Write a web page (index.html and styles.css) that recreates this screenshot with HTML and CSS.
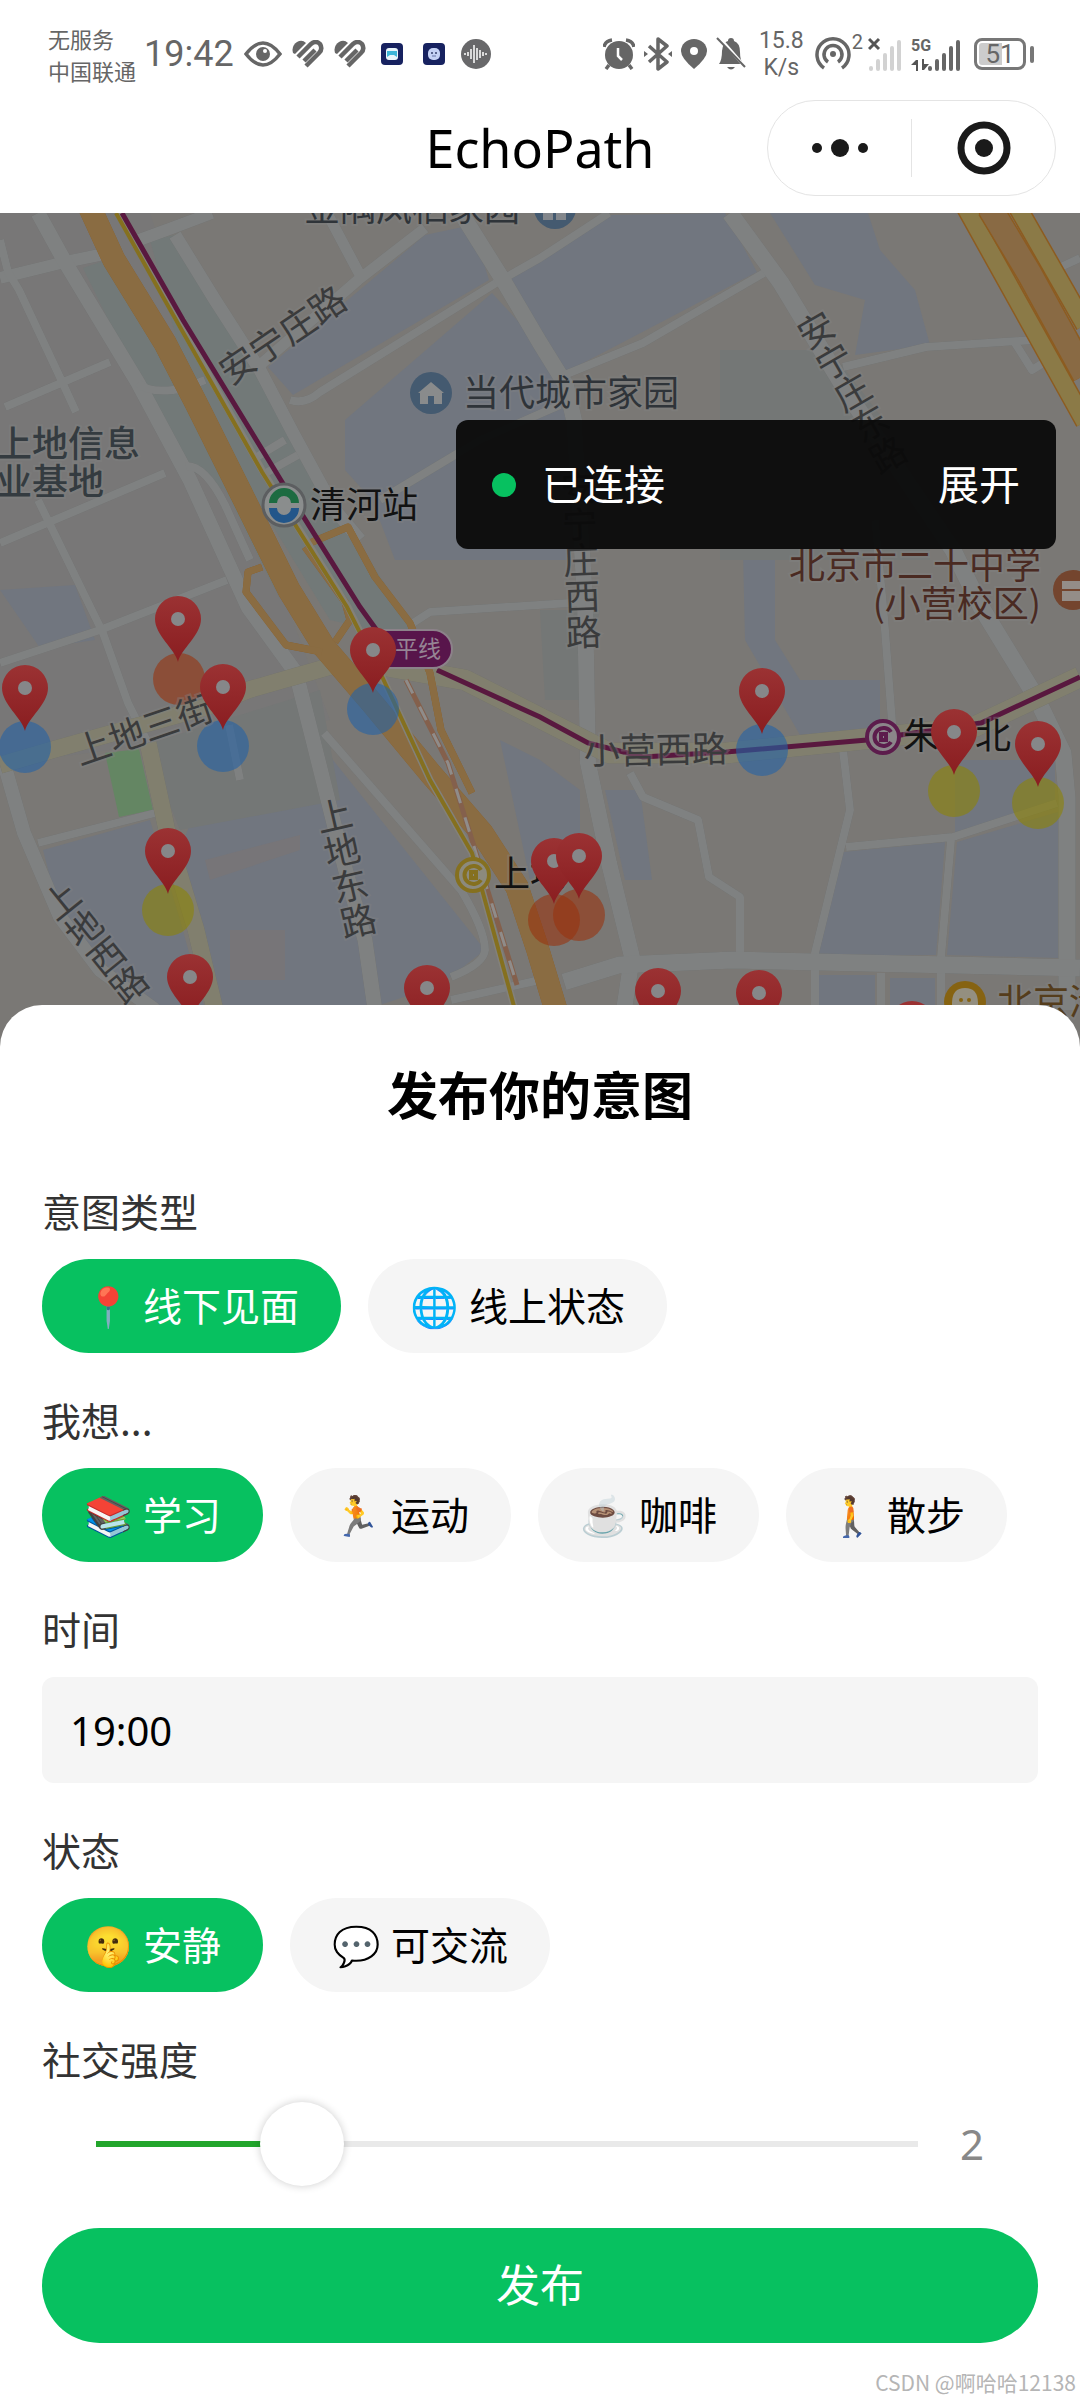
FILE: index.html
```html
<!DOCTYPE html>
<html lang="zh-CN">
<head>
<meta charset="utf-8">
<meta name="viewport" content="width=device-width, initial-scale=1">
<title>EchoPath</title>
<link rel="stylesheet" href="styles.css">
</head>
<body>
<div class="page">
  <header class="top">
    <div class="status">
      <div class="status-side">
        <div class="carrier"><span>无服务</span><span>中国联通</span></div>
        <span class="clock">19:42</span>
        <div class="tray">
          <svg width="38" height="28" viewBox="0 0 38 28"><path d="M2 14Q19-8 36 14Q19 36 2 14Z" fill="none" stroke="#666" stroke-width="3.5"/><circle cx="19" cy="14" r="7" fill="#666"/><circle cx="21" cy="11" r="2" fill="#fff"/></svg>
          <svg width="32" height="28" viewBox="0 0 32 28"><path d="M1 13Q-1 6 5 2Q10-1 14 3L3 14z" fill="#666"/><path d="M6 17L19 4Q24 0 28 4Q31 9 27 13L14 26M12 21L23 10" fill="none" stroke="#666" stroke-width="4.500"/></svg>
          <svg width="32" height="28" viewBox="0 0 32 28"><path d="M1 13Q-1 6 5 2Q10-1 14 3L3 14z" fill="#666"/><path d="M6 17L19 4Q24 0 28 4Q31 9 27 13L14 26M12 21L23 10" fill="none" stroke="#666" stroke-width="4.500"/></svg>
          <svg class="app-a" width="22" height="22" viewBox="0 0 22 22"><rect width="22" height="22" rx="4" fill="#172260"/><rect x="5" y="5" width="12" height="12" rx="3" fill="#e9f6fb"/><path d="M6 8h10v6l-3-2H9l-3 2z" fill="#3db6d8"/></svg>
          <svg class="app-b" width="22" height="22" viewBox="0 0 22 22"><rect width="22" height="22" rx="4" fill="#172260"/><rect x="5" y="5" width="12" height="12" rx="5" fill="#c5d2f5"/><circle cx="9" cy="10" r="1" fill="#34406d"/><circle cx="13" cy="10" r="1" fill="#34406d"/><path d="M9 13h4" stroke="#6675a8"/></svg>
          <svg class="wave" width="30" height="30" viewBox="0 0 30 30"><circle cx="15" cy="15" r="15" fill="#68686a"/><path d="M4 14v2M7 13v4M10 10v10M13 6v18M16 9v12M19 11v8M22 13v4M25 14v2" stroke="#fff" stroke-width="1.500"/></svg>
        </div>
      </div>
      <div class="status-side signals">
        <svg width="32" height="32" viewBox="0 0 32 32"><circle cx="16" cy="17" r="14" fill="#666"/><path d="M1 9Q2 3 9 2M31 9Q30 3 23 2M6 27l-3 4M26 27l3 4" stroke="#666" stroke-width="3.500" fill="none"/><path d="M15 10v8l4 4" stroke="#fff" stroke-width="2.500" fill="none"/></svg>
        <svg width="28" height="34" viewBox="0 0 28 34"><path d="M5 9l18 16-9 7V2l9 7L5 25" fill="none" stroke="#666" stroke-width="3.500" stroke-linejoin="round"/><path d="M0 14l4 3-4 3zM28 14l-4 3 4 3z" fill="#666"/></svg>
        <svg width="26" height="32" viewBox="0 0 26 32"><path d="M13 31Q0 20 0 13a13 12 0 0 1 26 0Q26 20 13 31Z" fill="#666"/><circle cx="13" cy="13" r="4" fill="#fff"/></svg>
        <svg width="30" height="34" viewBox="0 0 30 34"><path d="M3 27q3-4 3-13Q7 5 12 4q0-3 3-3t3 3q6 2 6 11 0 8 3 12zM11 30h8q-4 5-8 0z" fill="#666"/><path d="M3 0l26 30" stroke="#fff" stroke-width="3"/><path d="M1 1l28 29" stroke="#666" stroke-width="2"/></svg>
        <div class="speed"><span>15.8</span><span>K/s</span></div>
        <svg width="36" height="34" viewBox="0 0 36 34"><g fill="none" stroke="#666" stroke-width="3.500"><path d="M9 31a16 16 0 1 1 18 0"/><path d="M13 25a9 9 0 1 1 10 0"/></g><circle cx="18" cy="17" r="3" fill="#666"/></svg>
        <span class="hot-count">2</span>
        <svg class="sim" width="34" height="34" viewBox="0 0 34 34"><path d="M1 2l10 10M11 2L1 12" stroke="#555" stroke-width="3"/><path d="M3 31v1M10 24v8M17 18v14M24 11v21M31 5v27" stroke="#d2d2d2" stroke-width="4" stroke-linecap="round"/></svg>
        <div class="five"><span>5G</span><svg width="18" height="12" viewBox="0 0 18 12"><path d="M0 6l5-5h2v11H5V6zM11 0h2v5h5l-5 6h-2z" fill="#555"/></svg></div>
        <svg class="bars" width="34" height="34" viewBox="0 0 34 34"><path d="M3 31v1M10 24v8M17 18v14M24 11v21M31 5v27" stroke="#666" stroke-width="4" stroke-linecap="round"/></svg>
        <div class="battery">51</div>
      </div>
    </div>
    <div class="nav">
      <h1>EchoPath</h1>
      <div class="capsule">
        <button aria-label="更多"><svg width="58" height="58" viewBox="0 0 58 58"><g fill="#1a1a1a"><circle cx="6" cy="29" r="5"/><circle cx="29" cy="29" r="9"/><circle cx="52" cy="29" r="5"/></g></svg></button>
        <button aria-label="关闭"><svg width="58" height="58" viewBox="0 0 58 58"><circle cx="29" cy="29" r="23" fill="none" stroke="#1a1a1a" stroke-width="7"/><circle cx="29" cy="29" r="9" fill="#1a1a1a"/></svg></button>
      </div>
    </div>
  </header>

  <main class="map">
    <svg class="map-art" viewBox="0 213 1080 834" preserveAspectRatio="xMidYMin slice" aria-label="地图">
      <defs>
        <linearGradient id="red" x1="0" y1="0" x2="0" y2="1"><stop offset="0" stop-color="#9b3233"/><stop offset="1" stop-color="#8a1d20"/></linearGradient>
        <g id="pin"><path d="M0 43C-3 30-23 16-23 0a23 23 0 0 1 46 0C23 16 3 30 0 43Z" fill="url(#red)"/><circle r="7" fill="#868789"/></g>
        <g id="minor">
          <path d="M0 278L65 262L114 252M131 243L172 228L212 213" stroke-width="12"/>
          <path d="M0 240L8 272L19 290L58 373L76 412M5 407L110 362M0 543L165 473M38 500L103 633L128 703L148 743M0 663L100 630L227 580" />
          <path d="M38 213L65 262L138 383L190 480L248 607L296 673L313 740L345 868L365 940L375 1010" stroke-width="15"/>
          <path d="M138 383Q150 395 185 388L205 380M186 466Q205 465 225 505L250 560"/>
          <path d="M324 733L461 890Q485 930 485 950Q484 964 451 977M451 1000L540 980"/>
          <path d="M175 235L215 300L260 370L293 433L335 510L360 540" stroke-width="13"/>
          <path d="M425 228L358 280L260 365M327 213L360 275" stroke-width="11"/>
          <path d="M609 213L540 258L496 283L320 392Q305 405 290 400M380 500L480 440L560 405"/>
          <path d="M461 213L503 280L540 343L566 385L574 420L585 600L588 763L609 863L632 957L624 1010" stroke-width="16"/>
          <path d="M562 376L643 343L764 273"/>
          <path d="M730 213L781 283L850 397L953 550L981 607L1036 697L1063 753L1067 797V1010" stroke-width="17"/>
          <path d="M843 367L926 347L1034 340M1015 343L1032 370L1048 360M1050 272L1080 258"/>
          <path d="M875 520L884 617L893 735M843 750L850 810L815 953V1010M846 847L953 837L1057 803M951 840L941 957V1010M630 773L643 797L698 820L709 877L740 897V953M881 973V1010"/>
          <path d="M564 982L619 965L733 960L1080 968" stroke-width="17"/>
          <path d="M413 623L430 612L585 602M255 458L285 440M262 475L298 455"/>
          <path d="M3 760L24 833L60 917L100 970L155 1010" stroke-width="14"/>
          <path d="M38 843L155 813M229 725L240 780"/>
        </g>
        <g id="main">
          <path d="M0 765L52 750L206 707L248 690L335 665M148 743L169 840L196 930L215 1010" stroke-width="17"/>
          <path d="M375 664L465 680L540 718L609 753L726 753L884 737L974 727L1080 677" stroke-width="21"/>
        </g>
        <g id="highway">
          <path d="M90 208L114 260L165 343L196 403L241 493L289 590L324 647L372 703L430 773L482 833L517 887L537 947L556 1010" stroke-width="23"/>
          <path d="M262 567L248 572L246 592L286 645L322 652M310 543L348 527L375 577L410 623L430 673L441 730L472 793M305 547L345 602L350 620L335 642" stroke-width="7"/>
        </g>
      </defs>
      <rect y="213" width="1080" height="840" fill="#7a7875"/>
      <g class="zones">
        <path d="M0 213H150L240 480L330 720L0 765Z" fill="#787777"/>
        <path d="M150 240L175 235L335 505L420 640L330 620L190 390ZM83 268L112 258L190 390L240 500L280 600L225 490L190 470L140 385Z" fill="#727978"/>
        <path d="M425 235L472 225L489 280L293 395L268 367ZM345 420L492 293L540 345L570 410V560L395 560L372 500L345 470ZM500 283L609 215L725 213L757 272L566 372ZM770 213H868L880 250L915 290L930 345L855 355L865 300L815 285ZM0 590L75 585L95 640L40 648ZM43 850L150 820L180 920L205 1010H150L60 917ZM205 785H310L335 800L365 940L370 1010H220L180 850ZM325 750L485 950L440 985L380 1005ZM500 740L540 760L580 790V840L530 880ZM605 790H640L652 880H625ZM743 550H775V640L800 680H880V730L800 735L745 640ZM955 760H1055V800L955 835ZM843 852L945 842L936 955H818ZM957 842L1058 812V958L947 955ZM815 975H875V1010H815ZM890 978H935V1010H890Z" fill="#71767f"/>
        <path d="M720 350H830L930 480V560H720ZM145 745L320 690L340 800L180 830ZM600 610H540L545 700H580Z" fill="#747776"/>
        <path d="M105 753L139 749L153 810L119 817Z" fill="#648663"/>
        <path d="M230 930H285V980H230ZM205 860L300 835V850L210 880Z" fill="#777578"/>
      </g>
      <g class="road"><use href="#minor" class="edge"/><use href="#minor" class="fill"/></g>
      <g class="road arterial"><use href="#main" class="edge"/><use href="#main" class="fill"/></g>
      <g class="road express"><use href="#highway" class="edge"/><use href="#highway" class="fill"/></g>
      <g fill="none">
        <path d="M966 208L1085 422M1018 208L1085 325" stroke="#8d5c20" stroke-width="20"/>
        <path d="M966 208L1085 422M1018 208L1085 325" stroke="#8b7a47" stroke-width="17"/>
        <path d="M990 208L1029 273L1085 375" stroke="#8d5c20" stroke-width="27"/>
        <path d="M990 208L1029 273L1085 375" stroke="#896a44" stroke-width="24"/>
        <path d="M406 680L448 763L472 840L517 985" stroke="#84604c" stroke-width="5"/>
        <path d="M406 680L448 763L472 840L517 985" stroke="#8f8c8a" stroke-width="3" stroke-dasharray="15 15"/>
        <path d="M118 213L165 297L262 470L348 607L379 670L430 780L472 853L515 1010" stroke="#83817a" stroke-width="7"/>
        <path d="M116 213L163 297L262 472L347 607L379 670L430 780L472 853L515 1010" stroke="#85701f" stroke-width="4"/>
        <path d="M122 213L183 320L293 500L360 607L378 632M437 670L540 717L588 743L643 757L726 752L867 740L981 723L1080 677" stroke="#59183f" stroke-width="5"/>
      </g>
      <g class="halos">
        <g fill="#2563a5"><circle cx="25" cy="747" r="26"/><circle cx="223" cy="746" r="26"/><circle cx="373" cy="709" r="26"/><circle cx="762" cy="750" r="26"/></g>
        <g fill="#97330f"><circle cx="179" cy="679" r="26"/><circle cx="554" cy="920" r="26"/><circle cx="579" cy="915" r="26"/></g>
        <g fill="#8c8306"><circle cx="168" cy="910" r="26"/><circle cx="954" cy="791" r="26"/><circle cx="1038" cy="803" r="26"/></g>
      </g>
      <g class="names">
        <text x="304" y="221" class="poi">金隅凤栖家园</text>
        <text x="463" y="406" class="poi">当代城市家园</text>
        <text x="-4" y="457" class="area">上地信息</text>
        <text x="-4" y="495" class="area">业基地</text>
        <text x="310" y="518" class="station">清河站</text>
        <text x="494" y="887" class="station">上地</text>
        <text x="903" y="749" class="station">朱房北</text>
        <text x="1041" y="579" class="school" text-anchor="end">北京市二十中学</text>
        <text x="1041" y="617" class="school" text-anchor="end">(小营校区)</text>
        <text x="997" y="1015" class="gold">北京清</text>
        <g text-anchor="middle">
          <text transform="translate(290 346) rotate(-34)">安宁庄路</text>
          <text transform="translate(148 742) rotate(-19)">上地三街</text>
          <text transform="translate(656 763) rotate(-1)">小营西路</text>
          <text transform="translate(852 392) rotate(-30)" class="down">安宁庄东路</text>
          <text transform="translate(581 560) rotate(-2)" class="down">安宁庄西路</text>
          <text transform="translate(346 868) rotate(-13)" class="down">上地东路</text>
          <text transform="translate(95 942) rotate(-39)" class="down">上地西路</text>
        </g>
      </g>
      <g>
        <circle cx="431" cy="393" r="21" fill="#445a70"/><path d="M418 393l13-11 13 11h-2v11h-8v-8h-6v8h-8v-11z" fill="#898b8c"/>
        <circle cx="555" cy="208" r="21" fill="#445a70"/><path d="M543 212h10v8h-10zM556 212h10v8h-10z" fill="#83878c"/>
        <circle cx="284" cy="505" r="21" fill="#8a8d8d" stroke="#5c5e60" stroke-width="3"/><path d="M269 503a15 15 0 0 1 30 0h-8a7 7 0 0 0-14 0z" fill="#1d6b41"/><path d="M269 508a15 15 0 0 0 30 0h-8a7 7 0 0 1-14 0z" fill="#22568a"/>
        <rect x="352" y="630" width="100" height="38" rx="19" fill="#58154b" stroke="#8c828a" stroke-width="2"/>
        <text x="372" y="657" class="line-name">昌平线</text>
        <g fill="none" stroke-width="4"><circle cx="473" cy="875" r="16" fill="#8c8a7d" stroke="#85701f"/><path d="M481 870a9 9 0 1 0 0 10M476 872h-5v6h5z" stroke="#85701f"/><circle cx="883" cy="737" r="16" fill="#8b868a" stroke="#5c1c4c"/><path d="M891 732a9 9 0 1 0 0 10M886 734h-5v6h5z" stroke="#5c1c4c"/></g>
        <circle cx="1073" cy="590" r="20" fill="#74452e"/><path d="M1062 581h20v8h-20zM1062 591h20v10h-20z" fill="#948d88"/>
        <circle cx="965" cy="1002" r="21" fill="#866312"/><path d="M952 1003q0-15 13-15t13 15v10h-26z" fill="#948f80"/><circle cx="961" cy="1000" r="2" fill="#866312"/><circle cx="969" cy="1000" r="2" fill="#866312"/>
      </g>
      <g>
        <use href="#pin" x="25" y="688"/><use href="#pin" x="178" y="619"/><use href="#pin" x="223" y="687"/><use href="#pin" x="373" y="650"/><use href="#pin" x="168" y="851"/><use href="#pin" x="190" y="977"/><use href="#pin" x="427" y="988"/><use href="#pin" x="762" y="691"/><use href="#pin" x="954" y="732"/><use href="#pin" x="1038" y="744"/><use href="#pin" x="554" y="861"/><use href="#pin" x="579" y="856"/><use href="#pin" x="658" y="991"/><use href="#pin" x="759" y="993"/><use href="#pin" x="912" y="1024"/>
      </g>
    </svg>
    <div class="toast"><i class="dot"></i><span>已连接</span><button>展开</button></div>
  </main>

  <form class="sheet">
    <h2>发布你的意图</h2>
    <section>
      <h3>意图类型</h3>
      <div class="chips"><button type="button" class="chip on"><span class="emoji">📍</span>线下见面</button><button type="button" class="chip"><span class="emoji">🌐</span>线上状态</button></div>
    </section>
    <section>
      <h3>我想...</h3>
      <div class="chips"><button type="button" class="chip on"><span class="emoji">📚</span>学习</button><button type="button" class="chip"><span class="emoji">🏃</span>运动</button><button type="button" class="chip"><span class="emoji">☕</span>咖啡</button><button type="button" class="chip"><span class="emoji">🚶</span>散步</button></div>
    </section>
    <section>
      <label for="time">时间</label>
      <input id="time" class="time" type="text" value="19:00">
    </section>
    <section>
      <h3>状态</h3>
      <div class="chips"><button type="button" class="chip on"><span class="emoji">🤫</span>安静</button><button type="button" class="chip"><span class="emoji">💬</span>可交流</button></div>
    </section>
    <section class="last">
      <label for="level">社交强度</label>
      <div class="level"><input id="level" type="range" min="1" max="5" value="2"><output for="level">2</output></div>
    </section>
    <button type="submit" class="send">发布</button>
    <small class="mark">CSDN @啊哈哈12138</small>
  </form>
</div>
</body>
</html>
```
FILE: styles.css
```css
* { box-sizing: border-box; }
body { margin: 0; background: #fff; color: #000; font-family: "Noto Sans CJK SC", sans-serif; }
h1, h2, h3 { margin: 0; font-weight: 400; }
button, input { font: inherit; color: inherit; border: 0; margin: 0; padding: 0; background: none; }
svg { display: block; flex: none; }
.page { display: flex; flex-direction: column; min-height: 100vh; }

.top { background: #fff; }
.status { display: flex; justify-content: space-between; padding: 20px 46px 0 48px; height: 87px; color: #666; }
.status-side { display: flex; align-items: center; }
.carrier { display: flex; flex-direction: column; font-size: 22px; line-height: 32px; }
.clock { font-family: Roboto, sans-serif; font-size: 36px; margin: 0 10px 0 8px; }
.tray { display: flex; align-items: center; gap: 10px; }
.app-a { margin-left: 5px; }
.app-b { margin-left: 10px; }
.wave { margin-left: 6px; }
.signals { gap: 9px; }
.speed { display: flex; flex-direction: column; align-items: center; margin: 0 2px 0 4px; font-family: Roboto, sans-serif; font-size: 23px; line-height: 27px; }
.hot-count { align-self: flex-start; margin: 12px -4px 0 -8px; font-family: Roboto, sans-serif; font-size: 20px; line-height: 20px; }
.five { display: flex; flex-direction: column; gap: 4px; width: 18px; font: 700 16px/18px Roboto, sans-serif; }
.bars { margin-left: -11px; }
.battery { position: relative; width: 52px; height: 32px; margin: 0 8px 0 4px; border: 3px solid #777; border-radius: 8px; background: linear-gradient(to right, #ccc 55%, #fff 55%); box-shadow: inset 0 0 0 2px #fff; font: 26px/26px Roboto, sans-serif; text-align: center; }
.battery::after { content: ""; position: absolute; left: 53px; top: 5px; width: 4px; height: 17px; border-radius: 2px; background: #777; }

.nav { position: relative; display: flex; justify-content: center; align-items: center; height: 126px; padding-bottom: 4px; }
.nav h1 { font-family: "Noto Sans", sans-serif; font-size: 52px; line-height: 64px; }
.capsule { position: absolute; right: 24px; top: 13px; display: flex; align-items: center; width: 289px; height: 96px; border: 1px solid #e4e4e4; border-radius: 48px; }
.capsule button { flex: 1; display: flex; justify-content: center; }
.capsule button + button { border-left: 1px solid #e4e4e4; }

.map { position: relative; flex: 1 0 600px; margin-bottom: -42px; overflow: hidden; background: #7a7875; }
.map-art { position: absolute; inset: 0; width: 100%; height: 100%; }
.road { fill: none; stroke-width: 8px; stroke-linejoin: round; }
.road .edge { stroke: #6b6d6c; }
.road .fill { stroke: #7f8181; }
.arterial .fill { stroke: #817f6e; }
.express .edge { stroke: #8a5c22; }
.express .fill { stroke: #8a6c42; }
.names { font-size: 36px; fill: #3a3b3c; stroke: #82838360; stroke-width: 4px; paint-order: stroke; }
.poi { fill: #2f3439; }
.area { fill: #343b40; font-weight: 500; }
.station { fill: #121212; }
.school { fill: #4a2a22; }
.gold { fill: #553d1c; }
.down { writing-mode: vertical-rl; text-orientation: upright; }
.line-name { font-size: 23px; fill: #958494; }
.halos circle { opacity: .6; }
.toast { position: absolute; top: 207px; right: 24px; display: flex; align-items: center; width: 600px; height: 129px; padding: 0 36px; border-radius: 12px; background: #0a0a0af2; color: #fff; font-size: 41px; }
.toast span, .toast button { padding-bottom: 5px; }
.toast button { margin-left: auto; }
.dot { width: 24px; height: 24px; margin-right: 26px; border-radius: 50%; background: #07c160; }

.sheet { position: relative; padding: 53px 42px 57px; background: #fff; border-radius: 42px 42px 0 0; }
.sheet h2 { margin-bottom: 59px; font-size: 51px; font-weight: 700; line-height: 70px; text-align: center; }
section { margin-bottom: 43px; }
section h3, label { display: block; margin-bottom: 26px; font-size: 39px; line-height: 46px; color: #333; }
.chips { display: flex; flex-wrap: wrap; gap: 27px; }
.chip { display: flex; align-items: center; height: 94px; padding: 0 42px 4px; border-radius: 47px; background: #f5f5f5; font-size: 39px; }
.chip.on { background: #07c160; color: #fff; }
.emoji { width: 49px; margin-right: 10px; }
.time { display: block; width: 100%; height: 106px; padding: 0 28px; border-radius: 12px; background: #f5f5f5; font-family: "Noto Sans", sans-serif; font-size: 40px; }
.last { margin-bottom: 42px; }
.last label { margin-bottom: 21px; }
.level { display: flex; align-items: center; padding-left: 12px; }
.level input { flex: 1; min-width: 0; height: 84px; appearance: none; background: linear-gradient(to right, #22a52b 25%, #e9e9e9 25%) center / calc(100% - 84px) 6px no-repeat; }
.level input::-webkit-slider-thumb { appearance: none; width: 84px; height: 84px; border-radius: 50%; background: #fff; box-shadow: 0 0 8px #0003; }
.level output { flex: 0 0 78px; font-family: "Noto Sans", sans-serif; font-size: 42px; line-height: 46px; color: #888; }
.send { display: block; width: 100%; height: 115px; padding-bottom: 5px; border-radius: 58px; background: #07c160; color: #fff; font-size: 44px; }
.mark { position: absolute; right: 4px; bottom: 3px; font-size: 21px; line-height: 30px; color: #b5b5b5; }
```
